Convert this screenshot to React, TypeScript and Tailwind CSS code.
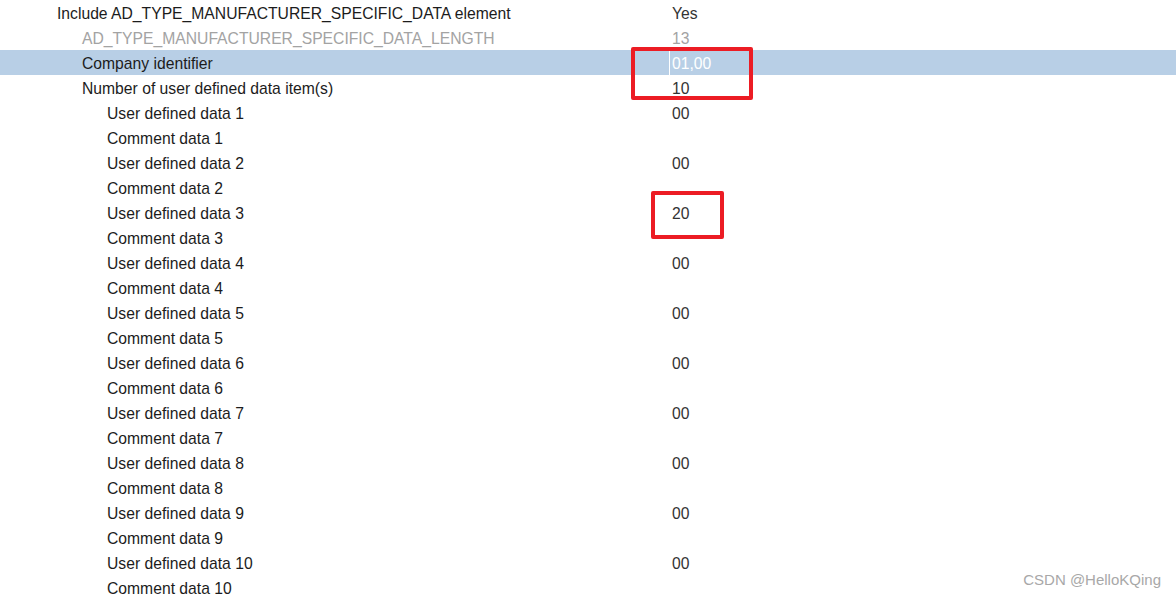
import React from 'react';

type Row = { label: string; value?: string; level: number; muted?: boolean; selected?: boolean };

const rows: Row[] = [
  { label: 'Include AD_TYPE_MANUFACTURER_SPECIFIC_DATA element', value: 'Yes', level: 0 },
  { label: 'AD_TYPE_MANUFACTURER_SPECIFIC_DATA_LENGTH', value: '13', level: 1, muted: true },
  { label: 'Company identifier', value: '01,00', level: 1, selected: true },
  { label: 'Number of user defined data item(s)', value: '10', level: 1 },
];

for (let i = 1; i <= 10; i++) {
  rows.push({ label: `User defined data ${i}`, value: i === 3 ? '20' : '00', level: 2 });
  rows.push({ label: `Comment data ${i}`, level: 2 });
}

const indent = ['pl-[57px]', 'pl-[82px]', 'pl-[107px]'];

const PropertyRow: React.FC<{ row: Row }> = ({ row }) => (
  <div className={`flex h-[25px] items-center ${row.selected ? 'bg-[#b8cfe6]' : ''}`}>
    <div
      className={`w-[669px] shrink-0 pt-[2px] ${indent[row.level]} ${row.muted ? 'text-[#a3a3a3]' : 'text-[#1c1c1c]'}`}
    >
      {row.label}
    </div>
    <div className={`flex h-full items-center pt-[2px] ${row.selected ? 'border-l border-white text-white' : 'pl-[3px]'} ${row.muted ? 'text-[#a3a3a3]' : row.selected ? '' : 'text-[#333]'}`}>
      <span className={row.selected ? 'pl-[2px]' : ''}>{row.value}</span>
    </div>
  </div>
);

export default function App() {
  return (
    <div className="relative h-[599px] w-[1176px] overflow-hidden bg-white font-['Liberation_Sans',Arial,sans-serif] text-[15.7px] leading-none">
      {rows.map((r, i) => (
        <PropertyRow key={i} row={r} />
      ))}

      {/* annotation boxes */}
      <div className="absolute left-[631px] top-[47px] h-[53px] w-[122px] rounded-[2px] border-[4px] border-[#ec1c24]" />
      <div className="absolute left-[651px] top-[191px] h-[48px] w-[73px] rounded-[2px] border-[4px] border-[#ec1c24]" />

      <div className="absolute right-[15px] top-[572px] text-[15px] text-[#a8a8a8]">CSDN @HelloKQing</div>
    </div>
  );
}
